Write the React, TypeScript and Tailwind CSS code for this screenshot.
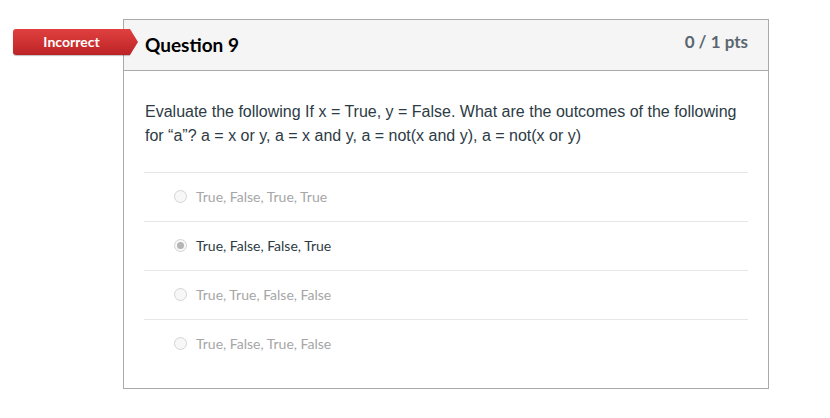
import React from 'react';

const options = [
  { label: 'True, False, True, True', selected: false },
  { label: 'True, False, False, True', selected: true },
  { label: 'True, True, False, False', selected: false },
  { label: 'True, False, True, False', selected: false },
];

const Radio: React.FC<{ checked: boolean }> = ({ checked }) => (
  <span className="flex h-[13px] w-[13px] shrink-0 items-center justify-center rounded-full border border-[#d4d4d4] bg-[#f7f7f7]">
    {checked && <span className="h-[7px] w-[7px] rounded-full bg-[#b5b5b5]" />}
  </span>
);

export default function App() {
  return (
    <div className="relative h-[418px] w-[830px] bg-white pt-[19px] pl-[123px]">
      {/* Incorrect badge */}
      <div className="absolute left-[13px] top-[29px] flex h-[26px] items-center">
        <div className="flex h-full w-[117px] items-center justify-center rounded-l-[3px] bg-gradient-to-b from-[#e0403f] to-[#bd2325] text-[14px] font-bold text-white [font-family:Lato,'Noto_Sans',sans-serif] shadow-[0_1px_1px_rgba(0,0,0,0.25)]">
          <span className="-mt-[2px]">Incorrect</span>
        </div>
        <div className="h-full w-[8px] bg-gradient-to-b from-[#e0403f] to-[#bd2325] [clip-path:polygon(0_0,100%_50%,0_100%)]" />
      </div>

      <div className="w-[646px] border border-[#aaaaaa] bg-white">
        <div className="flex h-[51px] items-center justify-between border-b border-[#aaaaaa] bg-[#f5f5f5] pl-[21px] pr-[20px] [font-family:Lato,sans-serif]">
          <h2 className="mt-[1px] text-[19px] font-bold text-[#000]">Question 9</h2>
          <span className="-mt-[7px] text-[17px] font-bold text-[#5b6670]">0 / 1 pts</span>
        </div>

        <div className="px-[20px] pb-[20px] pt-[29px]">
          <p className="pl-[1px] text-[16px] leading-[24px] text-[#2d3b45] [font-family:'Liberation_Sans',Arial,sans-serif]">
            Evaluate the following If x = True, y = False. What are the outcomes of the following for “a”? a = x or y, a = x and y, a = not(x and y), a = not(x or y)
          </p>

          <div className="mt-[24px]">
            {options.map((o) => (
              <div
                key={o.label}
                className="flex h-[49px] items-center gap-[9px] border-t border-[#e6e6e6] pb-[2px] pl-[30px] [font-family:Lato,sans-serif] text-[14px]"
              >
                <Radio checked={o.selected} />
                <span className={o.selected ? 'text-[#2d3b45]' : 'text-[#a6a6a6]'}>{o.label}</span>
              </div>
            ))}
          </div>
        </div>
      </div>
    </div>
  );
}
